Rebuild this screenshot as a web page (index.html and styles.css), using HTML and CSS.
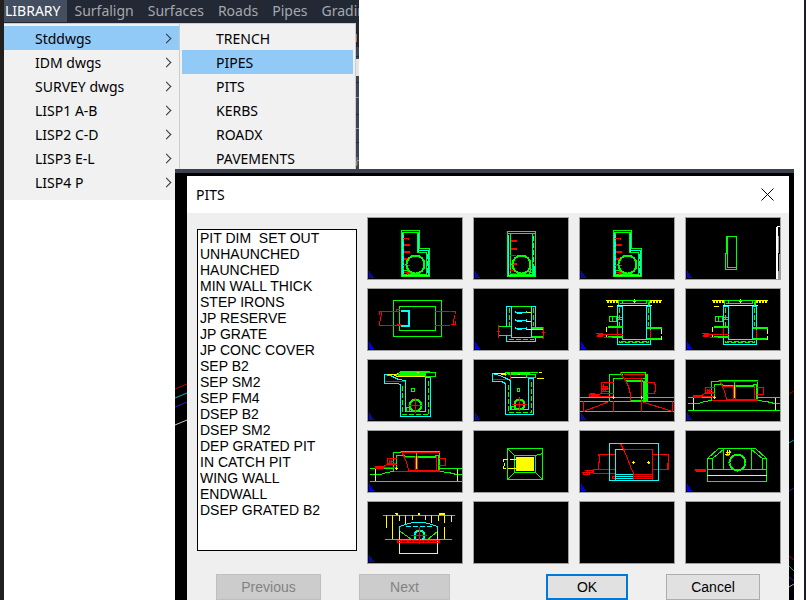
FILE: index.html
```
<!DOCTYPE html>
<html lang="en">
<head>
  <meta charset="UTF-8">
  <meta name="viewport" content="width=device-width, initial-scale=1.0">
  <title>PITS</title>
  <link rel="stylesheet" href="styles.css">
</head>
<body>
  <!-- Shared drawings -->
  <svg class="defs" aria-hidden="true">
    <symbol id="ucs" viewBox="0 0 7 8">
      <path fill="#00f" d="M1 0h1v2h1v1h1v2h1v1h1v1H1z"/>
      <path fill="#000" d="M2 3h1v1H2zM3 5h1v1H3z"/>
    </symbol>
    <symbol id="step-pit" viewBox="-.5 -.5 94 61">
      <path class="c" d="M34 15V57H60V32H50V15"/>
      <path class="g" d="M33 12H51V30H61V58H33ZM33 14H51M35 15V56H58V34H49V15M36 52H40V55"/>
      <path class="c dash" d="M35 16V55M50 18V33M59 35V56M51 32H59M35 57H60"/>
      <path class="r" d="M35 20H40V21M35 47H41M36 54H41V55M39 53V56M40 55H43"/>
      <path class="r w2" d="M35 26.500H41M35 33.500H41M35 40.500H41"/>
      <circle class="g w2" cx="47" cy="46" r="9"/>
    </symbol>
    <symbol id="deep-pit" viewBox="-.5 -.5 94 61">
      <path class="y" d="M26 11H38M69 11H81M37 16H71M28 17H32M54 10V14M53 12H55"/>
      <path class="y w2 dots" d="M26 12.500H38M69 12.500H81"/>
      <path class="g" d="M38 15V11H69V15M42 12V14H66V12M40 14H42M68 13V16M29 27H36V32H29ZM32 27V32M36 28H42M36 30H42"/>
      <path class="c" d="M37 17V55H70V17M42 17V50H66V17M37 17H42M66 17H70"/>
      <path class="g dash" d="M39 18V36M68 18V36M39 51V53H68V51M40 52H67"/>
      <path class="g w2" d="M27 37.500H42M27 47.500H42M66 38.500H81M66 49.500H81"/>
      <path class="y dash" d="M26 37V47M81 39V50"/>
      <path class="r" d="M37 39V46M70 41V48M18 45H42M24 48H31"/>
      <path class="r" d="M16 44H22V46H17V47H22M18 45V46M20 44V47"/>
    </symbol>
    <symbol id="dep-pit" viewBox="-.5 -.5 94 61">
      <path class="g" d="M2 37H25M72 37H93M2 50H93M2 43H12L18 41L26 40M71 40L80 41L88 43H93M25 40V21H33M32 20H71V40M28 37V24H36M48 20V24M67 24H70V40"/>
      <path class="g w2" d="M36 25.500H68"/>
      <path class="r" d="M32 20L34 22L36 26L38 31L40 38V40M33 21H71M37 26H47M26 40H71M41 39H71M68 25V40M47 25V39M49 25V39M71 27H77V34H71M28 27H19V33H28M21 29V32M23 29V32M20 32H27M22 30H25M28 36H14L18 33H20M7 35V37H15M8 36H14M8 35H14"/>
      <path class="y" d="M7 38V49M89 38V49M48 25V37M27 37H29M28 36V38"/>
    </symbol>
  </svg>

  <header class="app">
    <nav class="menubar">
      <button class="active">LIBRARY</button>
      <button>Surfalign</button>
      <button>Surfaces</button>
      <button>Roads</button>
      <button>Pipes</button>
      <button>Grading</button>
    </nav>
    <!-- Open menus -->
    <div class="menus">
      <div class="menu">
        <button class="sub active">Stddwgs</button>
        <button class="sub">IDM dwgs</button>
        <button class="sub">SURVEY dwgs</button>
        <button class="sub">LISP1 A-B</button>
        <button class="sub">LISP2 C-D</button>
        <button class="sub">LISP3 E-L</button>
        <button class="sub">LISP4 P</button>
      </div>
      <div class="menu second">
        <button>TRENCH</button>
        <button class="active">PIPES</button>
        <button>PITS</button>
        <button>KERBS</button>
        <button>ROADX</button>
        <button>PAVEMENTS</button>
      </div>
      <svg class="ribbon" width="3" height="146" aria-hidden="true">
        <path fill="#3c4656" d="M0 24h3v122H0z"/>
        <path fill="#b5763c" d="M0 11h1v8H0zM0 138h1v5H0z"/>
        <path fill="#e4e4e4" d="M0 36h3v17H0z"/>
        <path stroke="#8b929c" d="M0 74.500h3M0 105.500h3M1 134v8M1 137.500h2"/>
        <path stroke="#222834" d="M0 33.500h3M0 59.500h3M0 91.500h3M0 119.500h3"/>
      </svg>
    </div>
  </header>

  <main class="window">
    <svg class="strip left" width="12" height="424" aria-hidden="true">
      <path stroke="#c00000" d="M0 213L12 208"/>
      <path stroke="#00b4b4" d="M0 222L12 217"/>
      <path stroke="#2020d0" d="M0 231L12 226"/>
      <path stroke="#c8c8c8" d="M0 249L12 244"/>
    </svg>
    <svg class="strip right" width="5" height="424" aria-hidden="true">
      <path stroke="#900" d="M0 218L5 215M0 380L5 384"/>
      <path stroke="#00a0a0" d="M0 267L5 264M0 390L5 395"/>
      <path stroke="#2020b0" d="M0 315L5 312M0 401L5 405M0 426L5 424"/>
      <path stroke="#aaa" d="M0 411L5 408"/>
    </svg>
    <form class="dialog">
      <div class="title">
        <h1>PITS</h1>
        <button type="button" class="close" aria-label="Close">
          <svg width="13" height="13" viewBox="0 0 13 13"><path d="M.5 .5L12.500 12.500M12.500 .5L.5 12.500" stroke="#000"/></svg>
        </button>
      </div>
      <div class="content">
        <select class="list" size="20" aria-label="Pits">
          <option>PIT DIM&nbsp; SET OUT</option>
          <option>UNHAUNCHED</option>
          <option>HAUNCHED</option>
          <option>MIN WALL THICK</option>
          <option>STEP IRONS</option>
          <option>JP RESERVE</option>
          <option>JP GRATE</option>
          <option>JP CONC COVER</option>
          <option>SEP B2</option>
          <option>SEP SM2</option>
          <option>SEP FM4</option>
          <option>DSEP B2</option>
          <option>DSEP SM2</option>
          <option>DEP GRATED PIT</option>
          <option>IN CATCH PIT</option>
          <option>WING WALL</option>
          <option>ENDWALL</option>
          <option>DSEP GRATED B2</option>
        </select>

        <div class="slides">
          <button type="button" class="slide" aria-label="PIT DIM SET OUT">
            <svg viewBox="-.5 -.5 94 61"><use href="#step-pit" x="-.5" y="-.5" width="94" height="61"/><use href="#ucs" x="-.5" y="52.500" width="7" height="8"/></svg>
          </button>
          <button type="button" class="slide" aria-label="UNHAUNCHED">
            <svg viewBox="-.5 -.5 94 61">
              <path class="c" d="M34 17V57H60V48M59 48V56"/>
              <path class="g" d="M33 13H61V58H33ZM33 15H61M36 15V56H58V15M56 51H58V54H56ZM55 53V56"/>
              <path class="c dash" d="M34 17V57M59 17V57"/>
              <path class="r" d="M36 37H41M36 52H40V53M35 55H41"/>
              <path class="r w2" d="M36 22.500H42M36 30.500H42M36 45.500H42"/>
              <circle class="g w2" cx="47" cy="46" r="9"/>
              <use href="#ucs" x="-.5" y="52.500" width="7" height="8"/>
            </svg>
          </button>
          <button type="button" class="slide" aria-label="HAUNCHED">
            <svg viewBox="-.5 -.5 94 61"><use href="#step-pit" x="-.5" y="-.5" width="94" height="61"/><use href="#ucs" x="-.5" y="52.500" width="7" height="8"/></svg>
          </button>
          <button type="button" class="slide" aria-label="MIN WALL THICK">
            <svg viewBox="-.5 -.5 94 61">
              <path class="g" d="M41 49V18H50V51H39V35H40V18M41 49H50"/>
              <path stroke="#fff" class="w2" d="M90.500 8V61"/>
              <path stroke="#fff" d="M90 8H94"/>
              <path stroke="#999" d="M92 17V34M93 35V60M92 52V60"/>
              <use href="#ucs" x="-.5" y="52.500" width="7" height="8"/>
            </svg>
          </button>

          <button type="button" class="slide" aria-label="STEP IRONS">
            <svg viewBox="-.5 -.5 94 61">
              <path class="g" d="M25 11H73V47H25ZM31 17H67V41H31Z"/>
              <path class="r" d="M31 22H11V25M13 23V26M12 27V31M11 32V36H31M67 22H81M83 22H87V24M86 26V29M87 32V35H83M67 36H81M85 35V30M28 22V20H31"/>
              <path class="r w2" d="M28 35.500H32"/>
              <path class="c w2" d="M32 21.500H40.500V36.500H32"/>
              <use href="#ucs" x="-.5" y="52.500" width="7" height="8"/>
            </svg>
          </button>
          <button type="button" class="slide" aria-label="JP RESERVE">
            <svg viewBox="-.5 -.5 94 61">
              <path class="g" d="M38 17H56M24 37H37M24 46H37"/>
              <path class="g dash" d="M35 18V36M59 18V36M34 50H59V47"/>
              <path class="c" d="M37 17H32V37M32 46V52H61V48M57 17H61V38M37 17V48H57V17"/>
              <path class="y" d="M52 23H56M52 32H56M52 40H68"/>
              <path class="c w2" d="M42 23.500H47M42 31.500H47M42 39.500H47"/>
              <path class="c" d="M41 22V23H52V22M41 30V31H52V30M41 38V39H52V38"/>
              <path class="g w2" d="M57 38.500H69M57 47.500H69"/>
              <path class="r" d="M24 36V48M23 42H25M69 38V49M68 43H70"/>
              <use href="#ucs" x="-.5" y="52.500" width="7" height="8"/>
            </svg>
          </button>
          <button type="button" class="slide" aria-label="JP GRATE">
            <svg viewBox="-.5 -.5 94 61"><use href="#deep-pit" x="-.5" y="-.5" width="94" height="61"/><use href="#ucs" x="-.5" y="52.500" width="7" height="8"/></svg>
          </button>
          <button type="button" class="slide" aria-label="JP CONC COVER">
            <svg viewBox="-.5 -.5 94 61"><use href="#deep-pit" x="-.5" y="-.5" width="94" height="61"/><use href="#ucs" x="-.5" y="52.500" width="7" height="8"/></svg>
          </button>

          <button type="button" class="slide" aria-label="SEP B2">
            <svg viewBox="-.5 -.5 94 61">
              <path class="y" d="M17 14H26L28 16H57M26 15L31 12"/>
              <path class="r" d="M17 21H37"/>
              <path class="c" d="M16 14V23H29L32 24V56H62V17H57V51H37V20L30 19L26 17L22 15L16 14"/>
              <path class="g dash" d="M34 25V54H60V18"/>
              <path class="g" d="M28 15L32 11H61M57 12H67V16H57ZM43 28H46V31H43ZM38 47H41V51H38Z"/>
              <path class="g w2" d="M31 12.500H57M29 14H57"/>
              <path class="y" d="M49 12H50"/>
              <circle class="g w2" cx="47" cy="45" r="6"/>
              <path class="r" d="M40 45H54M47 38V52"/>
              <use href="#ucs" x="-.5" y="52.500" width="7" height="8"/>
            </svg>
          </button>
          <button type="button" class="slide" aria-label="SEP SM2">
            <svg viewBox="-.5 -.5 94 61">
              <path class="y" d="M19 13H30L33 12M36 17H52M65 12H67M63 18H69M27 14H31"/>
              <path class="r" d="M19 19H36"/>
              <path class="c" d="M18 13V21H27L31 23V54H59V18H54V49H36V20L30 17L25 15L18 13"/>
              <path class="g dash" d="M34 24V52H57V19"/>
              <path class="g" d="M31 12H63M52 14H61V17H52ZM43 28H45V31H43ZM37 46H40V49H37ZM31 15L34 12"/>
              <path class="g w2" d="M33 13.500H55"/>
              <path class="y" d="M44 14H45"/>
              <circle class="g w2" cx="45" cy="44" r="5"/>
              <path class="r" d="M36 12V18M38 44H52M45 37V50"/>
              <use href="#ucs" x="-.5" y="52.500" width="7" height="8"/>
            </svg>
          </button>
          <button type="button" class="slide" aria-label="SEP FM4">
            <svg viewBox="-.5 -.5 94 61">
              <path class="g" d="M0 37H93M0 41H93M0 51H93M29 41V14H42M40 12H65V41M33 37V18H65M50 40H62"/>
              <path class="g w2" d="M44 20.500H62M63.500 20V41M66 13V41"/>
              <path class="r" d="M40 12L42 16L45 20L48 26L50 34V40M44 14H64M44 18H62M61 18V51M33 41V51M67 22H74V24H75V31H74V33H67M33 22H21V33H33M22 26H27V29H22M22 31H28M23 24V31M25 26V31M22 28H28M33 36H16L20 33M9 34V36H18V34H9M11 35H17M10 33H14M3 41V51L29 41M61 41L92 51V41"/>
              <path class="y" d="M32 37H34M33 36V38M61 36V38M61 37H62"/>
              <use href="#ucs" x="-.5" y="52.500" width="7" height="8"/>
            </svg>
          </button>
          <button type="button" class="slide" aria-label="DSEP B2">
            <svg viewBox="-.5 -.5 94 61"><use href="#dep-pit" x="-.5" y="-.5" width="94" height="61"/><use href="#ucs" x="-.5" y="52.500" width="7" height="8"/></svg>
          </button>

          <button type="button" class="slide" aria-label="DSEP SM2">
            <svg viewBox="-.5 -.5 94 61"><use href="#dep-pit" x="-.5" y="-.5" width="94" height="61"/><use href="#ucs" x="-.5" y="52.500" width="7" height="8"/></svg>
          </button>
          <button type="button" class="slide" aria-label="DEP GRATED PIT">
            <svg viewBox="-.5 -.5 94 61">
              <path class="g" d="M33 17H68V48H33ZM40 24H61V41H40ZM33 17L40 24M68 22L61 24M33 48L40 41M68 48L61 41"/>
              <path fill="#ff0" d="M41.500 25.500H59.500V39.500H41.500Z"/>
              <path class="y" d="M41 28H36M33 28H29V30M30 32V34M29 35V37H31M34 37H41"/>
            </svg>
          </button>
          <button type="button" class="slide" aria-label="IN CATCH PIT">
            <svg viewBox="-.5 -.5 94 61">
              <path class="r" d="M35 23H18V24H19V31H18V38M35 38H13V42H35M72 23H88V38H72M87 32V37M42 18H72V49H53V42L50 35L47 27L44 20L40 12M53 43H72M53 45H72M53 47H72M35 45H32V47H35"/>
              <path class="c" d="M29 12H78V49H29ZM42 18H35V49M35 43H52M35 45H52M35 47H52"/>
              <path class="r" d="M2 41H9V43H3V41M5 39H12V41H5M7 39V43M9 41H13"/>
              <path class="y" d="M52 31H54M53 30V32M67 31H69M68 30V32"/>
              <path class="g" d="M69 32V32"/>
              <use href="#ucs" x="-.5" y="52.500" width="7" height="8"/>
            </svg>
          </button>
          <button type="button" class="slide" aria-label="WING WALL">
            <svg viewBox="-.5 -.5 94 61">
              <path class="g" d="M21 27V50H80V27L69 17H32L21 27M21 38H80M37 17V38M65 17V38M37 18L26 27V38M65 18L76 27V38M21 27H26M76 27H80"/>
              <circle class="g w2" cx="51" cy="31" r="8"/>
              <path class="y" d="M40 21H44M39 23H43M41 19V24M43 19V23M21 44H80"/>
              <path class="g" d="M40 24H42M44 20V20"/>
              <path class="r w2" d="M8 38.500H19M9 39.500H19"/>
              <path class="r" d="M43 32V32M59 32V32"/>
              <use href="#ucs" x="-.5" y="52.500" width="7" height="8"/>
            </svg>
          </button>

          <button type="button" class="slide" aria-label="ENDWALL">
            <svg viewBox="-.5 -.5 94 61">
              <path class="g" d="M15 13H86M17 37H83M32 29L43 37M69 29L59 37"/>
              <path class="y" d="M18 13V25M24 13V36M31 13V18M37 13V21M44 13V17M57 13V17M63 13V20M70 13V18M76 13V20M76 25V36M83 13V19M31 38V51H69V38M27 11H29M28 12H29M50 11H51M50 12H51M71 11H76M71 12H76"/>
              <path class="c" d="M31 28V24L37 22L44 20H56L63 22L69 24V28"/>
              <path class="y" d="M31 29V37M69 29V37"/>
              <path class="c dash" d="M37 24H64"/>
              <circle class="g w2" cx="51" cy="33" r="5"/>
              <circle class="c w2 dots" cx="51" cy="33" r="5"/>
              <path class="r" d="M43 33H58M51 25V41M29 38H71V40H29ZM33 38V40M38 38L41 40M45 40V38M55 38V40M60 38V40M65 40V38"/>
              <use href="#ucs" x="-.5" y="52.500" width="7" height="8"/>
            </svg>
          </button>
          <button type="button" class="slide" aria-label="DSEP GRATED B2"><svg viewBox="-.5 -.5 94 61"></svg></button>
          <button type="button" class="slide" aria-label="Empty"><svg viewBox="-.5 -.5 94 61"></svg></button>
          <button type="button" class="slide" aria-label="Empty"><svg viewBox="-.5 -.5 94 61"></svg></button>
        </div>
      </div>

      <div class="actions">
        <button type="button" class="prev" disabled>Previous</button>
        <button type="button" class="next" disabled>Next</button>
        <button type="button" class="ok">OK</button>
        <button type="button" class="cancel">Cancel</button>
      </div>
    </form>
  </main>
</body>
</html>
```
FILE: styles.css
```
* {
  margin: 0;
  padding: 0;
  box-sizing: border-box;
}
body {
  min-height: 100vh;
  background-color: #fff;
  border-left: 4px solid #221f1f;
  border-right: 2px solid #1b1d22;
  font-family: "Liberation Sans", Arial, sans-serif;
  font-size: 14px;
  color: #000;
}
button {
  border: none;
  background: none;
  font: inherit;
  color: inherit;
}
.defs {
  position: absolute;
  width: 0;
  height: 0;
}

/* Menus */
.app {
  position: relative;
  width: 355px;
  height: 169px;
  font-family: "Noto Sans", "Open Sans", sans-serif;
}
.menubar {
  display: flex;
  height: 23px;
  overflow: hidden;
  background-color: #222834;
}
.menubar button {
  flex: none;
  height: 22px;
  padding: 0 7px;
  line-height: 22px;
  color: #a4a8ae;
}
.menubar .active {
  padding: 0 7px 0 1px;
  background-color: #444e61;
  color: #fff;
}
.menus {
  position: absolute;
  top: 23px;
  left: 0;
  width: 100%;
  display: flex;
  align-items: flex-start;
}
.menu {
  flex: none;
  width: 175px;
  padding-top: 2px;
  padding-bottom: 6px;
  background-color: #f1f1f1;
  border-top: 1px solid #ccc;
}
.menu button {
  display: flex;
  align-items: center;
  width: 100%;
  height: 24px;
  padding-left: 31px;
  text-align: left;
}
.menu .active {
  background-color: #91c9f7;
}
.menu .sub::after {
  content: "";
  width: 6px;
  height: 6px;
  margin-left: auto;
  margin-right: 9px;
  border-top: 1px solid #333;
  border-right: 1px solid #333;
  transform: rotate(45deg);
}
.menu.second {
  width: 177px;
  padding: 2px 2px 0;
  border-left: 1px solid #ccc;
  border-right: 1px solid #ccc;
}
.second button {
  padding-left: 34px;
}
.ribbon {
  background-color: #222834;
}

/* Drawing window behind the dialog */
.window {
  position: relative;
  min-height: calc(100vh - 169px);
  margin-left: 171px;
  margin-right: 10px;
  padding: 3px 5px 0 12px;
  border-top: 4px solid #3a4250;
  background-color: #000;
}
.strip {
  position: absolute;
  top: 3px;
}
.strip.left {
  left: 0;
}
.strip.right {
  right: 0;
}

/* Dialog */
.dialog {
  background-color: #efefef;
}
.title {
  display: flex;
  align-items: center;
  justify-content: space-between;
  height: 37px;
  padding: 0 15px 0 9px;
  background-color: #fff;
}
.title h1 {
  font-family: "Noto Sans", "Open Sans", sans-serif;
  font-size: 14px;
  font-weight: normal;
}
.close {
  display: flex;
}
.content {
  display: flex;
  align-items: flex-start;
  gap: 10px;
  padding: 4px 8px 10px 10px;
}
.list {
  flex: none;
  width: 160px;
  height: 322px;
  margin-top: 12px;
  padding: 0;
  border: 1px solid #000;
  border-radius: 0;
  background-color: #fff;
  font: inherit;
  color: #000;
  overflow: hidden;
}
.list option {
  height: 16px;
  min-height: 16px;
  padding: 0 2px;
  line-height: 16px;
}
.slides {
  flex: 1;
  display: grid;
  grid-template-columns: repeat(4, 1fr);
  gap: 8px 10px;
}
.slide {
  border: 1px solid #a0a0a0;
  background-color: #000;
}
.slide svg {
  display: block;
  width: 100%;
  fill: none;
  shape-rendering: crispEdges;
}
.g, .r, .c, .y {
  stroke-linecap: square;
}
.g { stroke: #0f0; }
.r { stroke: #f00; }
.c { stroke: #0ff; }
.y { stroke: #ff0; }
.w2 {
  stroke-width: 2;
  stroke-linecap: butt;
}
.dash {
  stroke-dasharray: 5 2;
  stroke-linecap: butt;
}
.dots { stroke-dasharray: 2 1; }

/* Buttons */
.actions {
  display: flex;
  gap: 38px;
  padding: 0 29px;
}
.actions button {
  height: 26px;
  border: 1px solid #adadad;
  background-color: #e1e1e1;
}
.actions button:disabled {
  border-color: #bfbfbf;
  background-color: #ccc;
  color: #838383;
}
.actions .prev {
  width: 105px;
}
.actions .next {
  width: 91px;
}
.actions .ok {
  width: 82px;
  margin-left: auto;
  border: 2px solid #0078d7;
}
.actions .cancel {
  width: 94px;
}
```
